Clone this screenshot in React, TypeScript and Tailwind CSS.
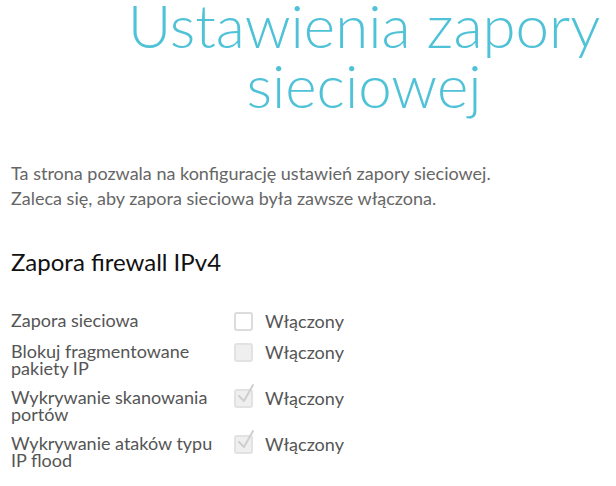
import React from 'react';

type Row = { label: string; state: 'empty' | 'disabled' | 'checked' };

const rows: Row[] = [
  { label: 'Zapora sieciowa', state: 'empty' },
  { label: 'Blokuj fragmentowane pakiety IP', state: 'disabled' },
  { label: 'Wykrywanie skanowania portów', state: 'checked' },
  { label: 'Wykrywanie ataków typu IP flood', state: 'checked' },
];

function Box({ state }: { state: Row['state'] }) {
  return (
    <div className="relative w-[19px] h-[19px] shrink-0">
      <div
        className={
          state === 'empty'
            ? 'w-full h-full rounded-[3px] border-2 border-[#dcdcdc] bg-white'
            : 'w-full h-full rounded-[3px] border-2 border-[#e2e2e2] bg-[#efefef]'
        }
      />
      {state === 'checked' && (
        <svg className="absolute left-[3px] top-[-6px]" width="20" height="22" viewBox="0 0 20 22" fill="none">
          <path d="M2 13 L7 18 L16 2" stroke="#cfcfcf" strokeWidth="2" strokeLinecap="round" strokeLinejoin="round" />
        </svg>
      )}
    </div>
  );
}

export default function App() {
  return (
    <div className="min-h-screen bg-white px-[11px] font-['Lato',sans-serif]">
      {/* Title */}
      <h1 className="-mt-[5px] pl-[112px] text-center text-[60px] leading-[60px] font-light text-[#4fc2d7]">
        Ustawienia zapory sieciowej
      </h1>

      <p className="mt-[46px] text-[18px] leading-[25px] text-[#666]">
        Ta strona pozwala na konfigurację ustawień zapory sieciowej.
        <br />
        Zaleca się, aby zapora sieciowa była zawsze włączona.
      </p>

      <h2 className="mt-[37px] text-[24px] leading-[28px] text-[#111]">Zapora firewall IPv4</h2>

      <div className="mt-[36px] flex flex-col gap-[12px]">
        {rows.map((row) => (
          <div key={row.label} className="flex items-start">
            <div className="w-[223px] shrink-0 pr-[6px] text-[18px] leading-[17px] text-[#555]">{row.label}</div>
            <div className="flex items-start gap-[12px]">
              <Box state={row.state} />
              <span className="text-[18px] leading-[19px] text-[#555]">Włączony</span>
            </div>
          </div>
        ))}
      </div>
    </div>
  );
}
